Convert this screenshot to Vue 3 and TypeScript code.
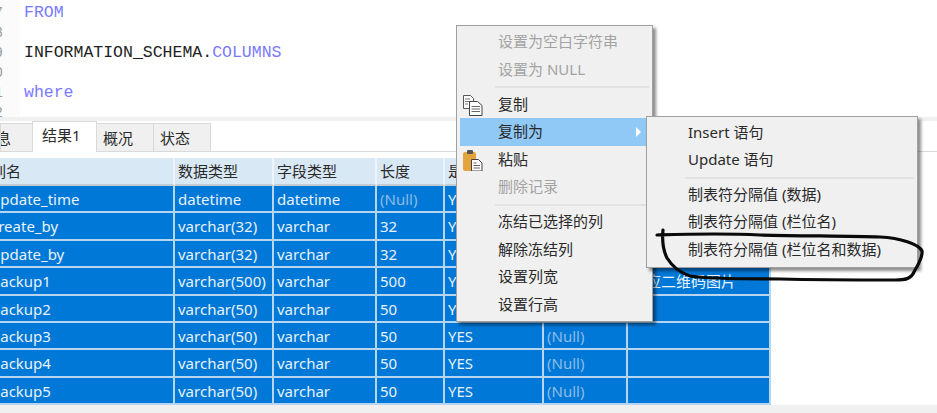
<script setup lang="ts">
interface MenuEntry { label?: string; disabled?: boolean; active?: boolean; icon?: 'copy' | 'paste'; sep?: boolean; arrow?: boolean }

const mainMenu: MenuEntry[] = [
  { label: '设置为空白字符串', disabled: true },
  { label: '设置为 NULL', disabled: true },
  { sep: true },
  { label: '复制', icon: 'copy' },
  { label: '复制为', active: true, arrow: true },
  { label: '粘贴', icon: 'paste' },
  { label: '删除记录', disabled: true },
  { sep: true },
  { label: '冻结已选择的列' },
  { label: '解除冻结列' },
  { label: '设置列宽' },
  { label: '设置行高' },
]

const subMenu: MenuEntry[] = [
  { label: 'Insert 语句' },
  { label: 'Update 语句' },
  { sep: true },
  { label: '制表符分隔值 (数据)' },
  { label: '制表符分隔值 (栏位名)' },
  { label: '制表符分隔值 (栏位名和数据)' },
]

const headers = ['列名', '数据类型', '字段类型', '长度', '是否为空', '默认值', '备注']

const rows: string[][] = [
  ['update_time', 'datetime', 'datetime', '(Null)', 'YES', '(Null)', ''],
  ['create_by', 'varchar(32)', 'varchar', '32', 'YES', '(Null)', ''],
  ['update_by', 'varchar(32)', 'varchar', '32', 'YES', '(Null)', ''],
  ['backup1', 'varchar(500)', 'varchar', '500', 'YES', '(Null)', '对应二维码图片'],
  ['backup2', 'varchar(50)', 'varchar', '50', 'YES', '(Null)', ''],
  ['backup3', 'varchar(50)', 'varchar', '50', 'YES', '(Null)', ''],
  ['backup4', 'varchar(50)', 'varchar', '50', 'YES', '(Null)', ''],
  ['backup5', 'varchar(50)', 'varchar', '50', 'YES', '(Null)', ''],
]

const gutter = ['7', '8', '9', '0', '1', '2']
</script>

<template>
  <div class="screen">
    <section class="editor">
      <div class="gutter">
        <span v-for="(n, i) in gutter" :key="i">{{ n }}</span>
      </div>
      <div class="code">
        <div class="kw">FROM</div>
        <div>&nbsp;</div>
        <div>INFORMATION_SCHEMA.<span class="kw">COLUMNS</span></div>
        <div>&nbsp;</div>
        <div class="kw">where</div>
      </div>
    </section>

    <nav class="tabs">
      <div class="tab first">信息</div>
      <div class="tab active">结果1</div>
      <div class="tab">概况</div>
      <div class="tab">状态</div>
    </nav>

    <section class="grid-wrap">
      <div class="grid">
        <div v-for="h in headers" :key="h" class="cell head">{{ h }}</div>
        <template v-for="(row, r) in rows" :key="r">
          <div
            v-for="(val, c) in row"
            :key="c"
            class="cell"
            :class="{ nul: val === '(Null)' }"
          >{{ val }}</div>
        </template>
      </div>
    </section>

    <footer class="status"></footer>

    <div class="menu main-menu">
      <template v-for="(m, i) in mainMenu" :key="i">
        <div v-if="m.sep" class="sep"></div>
        <div v-else class="item" :class="{ disabled: m.disabled, active: m.active }">
          <svg v-if="m.icon === 'copy'" class="ico" width="22" height="22" viewBox="0 0 22 22">
            <path d="M0.500 1.500h7l3 3v10h-10z" fill="#fff" stroke="#555" />
            <path d="M2 5h5M2 7.500h5M2 10h3" stroke="#777" />
            <path d="M6.500 7.500h8l4.500 4v10h-12.500z" fill="#fff" stroke="#444" />
            <path d="M8.500 12.500h8.500M8.500 15h8.500M8.500 17.500h8.500" stroke="#666" />
          </svg>
          <svg v-if="m.icon === 'paste'" class="ico" width="22" height="22" viewBox="0 0 22 22">
            <rect x="0" y="3" width="13" height="19" rx="2" fill="#e3a33e" />
            <rect x="4" y="1" width="6" height="4" rx="1" fill="#555" />
            <path d="M8.500 10.500h7l3.500 3.500v8h-10.500z" fill="#fff" stroke="#444" />
            <path d="M10.500 14h3M10.500 16.500h6.500M10.500 19h6.500" stroke="#666" />
          </svg>
          <span class="label">{{ m.label }}</span>
          <span v-if="m.arrow" class="arrow"></span>
        </div>
      </template>
    </div>

    <div class="menu sub-menu">
      <template v-for="(m, i) in subMenu" :key="i">
        <div v-if="m.sep" class="sep"></div>
        <div v-else class="item">
          <span class="label">{{ m.label }}</span>
        </div>
      </template>
    </div>

    <svg class="ink" width="937" height="413" viewBox="0 0 937 413">
      <path
        d="M657 235 C690 234 720 233 760 235 C800 236 850 236 880 237 C900 238 919 244 922 251 C923 258 917 266 914 272 C911 279 905 280 895 280 C860 280 820 280 780 279 C750 279 710 279 690 276 C678 272 672 266 667 258 C663 250 662 240 663 230"
        fill="none"
        stroke="#0a0a0a"
        stroke-width="3.2"
        stroke-linecap="round"
      />
    </svg>
  </div>
</template>

<style scoped>
.screen {
  position: relative;
  width: 937px;
  height: 413px;
  overflow: hidden;
  display: flex;
  flex-direction: column;
  background: #fff;
  font-family: "Noto Sans", "Noto Sans CJK SC", sans-serif;
  font-size: 15px;
  color: #2a2a2a;
}

.editor {
  height: 117px;
  flex: none;
  display: flex;
  overflow: hidden;
  background: #fff;
  border-bottom: 4px solid #f0f0f0;
  box-sizing: content-box;
}
.gutter {
  width: 20px;
  flex: none;
  display: flex;
  flex-direction: column;
  align-items: flex-end;
  background: #fbfbfb;
  padding: 3px 17px 0 0;
  box-sizing: border-box;
  font: 14px/20px "Liberation Mono", monospace;
  color: #9a9a9a;
}
.code {
  padding: 3px 0 0 4px;
  font: 16.5px/20px "Liberation Mono", monospace;
  color: #222;
}
.kw { color: #7a7aff; }

.tabs {
  height: 31px;
  flex: none;
  display: flex;
  align-items: flex-end;
  box-sizing: border-box;
  border-bottom: 1px solid #d9d9d9;
}
.tab {
  width: 58px;
  height: 28px;
  box-sizing: border-box;
  background: #f0f0f0;
  border: 1px solid #d9d9d9;
  border-bottom: none;
  margin-left: -1px;
  padding-left: 6px;
  line-height: 29px;
}
.tab.first {
  width: 33px;
  margin-left: 0;
  padding-left: 0;
  text-indent: -20px;
  white-space: nowrap;
  overflow: hidden;
}
.tab.active {
  width: 65px;
  height: 31px;
  margin-bottom: -1px;
  padding-left: 9px;
  background: #fff;
  line-height: 27px;
  position: relative;
}

.grid-wrap {
  flex: none;
  height: 253px;
  padding-top: 6px;
  box-sizing: border-box;
  overflow: hidden;
  background: #fff;
}
.grid {
  display: grid;
  width: 783px;
  margin-left: -12px;
  grid-template-columns: 187px 99px 103px 68px 99px 84px 143px;
  grid-template-rows: 28px repeat(8, 27.4px);
}
.cell {
  box-sizing: border-box;
  padding: 0 0 0 3px;
  line-height: 26px;
  white-space: nowrap;
  overflow: hidden;
  background: #0078d7;
  color: #e8f2fb;
  border-right: 2px solid #b5d5f0;
  border-bottom: 2px solid #b5d5f0;
}
.cell.head {
  background: #d9e8f5;
  color: #2a2a2a;
  border-right-color: #eef4fa;
  border-bottom-color: #c4ccd4;
}
.cell.nul { color: #8dbce6; }

.status {
  flex: 1;
  background: #f0f0f0;
}

.menu {
  position: absolute;
  box-sizing: border-box;
  background: #f0f0f0;
  border: 1px solid #a0a0a0;
  padding: 2px 3px;
  box-shadow: 3px 3px 3px rgba(0, 0, 0, 0.45);
}
.main-menu {
  left: 456px;
  top: 25px;
  width: 197px;
  height: 297px;
}
.sub-menu {
  left: 646px;
  top: 116px;
  width: 272px;
  height: 152px;
  padding-top: 1.5px;
}
.item {
  position: relative;
  height: 27.5px;
  line-height: 27.5px;
  padding-left: 38px;
  white-space: nowrap;
  color: #2a2a2a;
}
.item.disabled { color: #a3a3a3; }
.item.active { background: #90c8f6; }
.sep {
  height: 7.5px;
  margin-left: 35px;
  position: relative;
}
.sub-menu .sep { height: 7px; }
.sep::after {
  content: "";
  position: absolute;
  left: 0;
  right: 0;
  top: 3px;
  height: 2px;
  background: #e2e2e2;
}
.ico {
  position: absolute;
  left: 3px;
  top: 3px;
}
.arrow {
  position: absolute;
  right: 8px;
  top: 9px;
  width: 0;
  height: 0;
  border-left: 5px solid #fff;
  border-top: 5px solid transparent;
  border-bottom: 5px solid transparent;
}

.ink {
  position: absolute;
  left: 0;
  top: 0;
  pointer-events: none;
}
</style>
